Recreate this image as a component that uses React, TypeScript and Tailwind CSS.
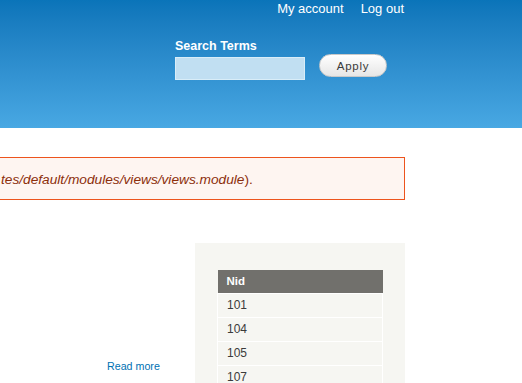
import React from "react";

export default function App() {
  const rows = ["101", "104", "105", "107"];
  return (
    <div
      className="w-[522px] h-[383px] overflow-hidden bg-white relative"
      style={{ fontFamily: '"Liberation Sans", Arial, sans-serif' }}
    >
      {/* Header */}
      <div className="h-[128px] bg-gradient-to-b from-[#0a74b9] to-[#48a8e3] relative">
        <div className="flex justify-end gap-[17px] pr-[118px] pt-[1px] text-[13px] leading-[16px] text-white">
          <span>My account</span>
          <span>Log out</span>
        </div>
        <div className="pl-[175px] pt-[22px] flex items-end gap-[14px]">
          <div className="flex flex-col">
            <label className="text-[12.5px] leading-[14px] font-bold text-white">Search Terms</label>
            <div className="mt-[4px] w-[130px] h-[23px] bg-[#c1dff2] border border-[#d9edf8]" />
          </div>
          <button className="mb-[3px] w-[68px] h-[23px] rounded-full border border-[#c9c9c9] bg-gradient-to-b from-[#ffffff] to-[#e6e6e6] text-[11.5px] text-[#3a3a3a] tracking-[0.7px] leading-[20px]">
            Apply
          </button>
        </div>
      </div>

      {/* Message */}
      <div className="mt-[29px] ml-[-2px] w-[407px] h-[43px] border border-[#ed541d] bg-[#fef5f1] flex items-center">
        <span className="pl-[2px] pt-[3px] text-[13.7px] text-[#8c2e0b] whitespace-nowrap">
          <em>tes/default/modules/views/views.module</em>).
        </span>
      </div>

      {/* Content row */}
      <div className="flex mt-[43px]">
        <div className="w-[195px] pl-[107px] pt-[110px]">
          <a className="text-[10.7px] leading-[14px] text-[#0071b3]">Read more</a>
        </div>
        <div className="w-[210px] h-[200px] bg-[#f6f6f2] pl-[22px] pr-[22px] pt-[27px]">
          <table className="w-[166px] border-collapse text-[12px]">
            <thead>
              <tr className="bg-[#71706c]">
                <th className="h-[23px] text-left pl-[9px] text-white font-bold text-[11.5px]">Nid</th>
              </tr>
            </thead>
            <tbody>
              {rows.map((r) => (
                <tr key={r}>
                  <td className="h-[24px] pl-[9px] text-[#3b3b3b] border border-white">{r}</td>
                </tr>
              ))}
            </tbody>
          </table>
        </div>
      </div>
    </div>
  );
}
